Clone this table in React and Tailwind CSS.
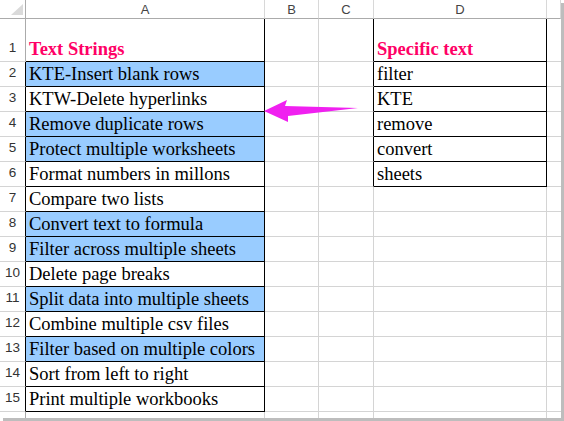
import React from 'react';

const rows = [
  { a: 'Text Strings', d: 'Specific text', head: true },
  { a: 'KTE-Insert blank rows', d: 'filter', blue: true },
  { a: 'KTW-Delete hyperlinks', d: 'KTE' },
  { a: 'Remove duplicate rows', d: 'remove', blue: true },
  { a: 'Protect multiple worksheets', d: 'convert', blue: true },
  { a: 'Format numbers in millons', d: 'sheets' },
  { a: 'Compare two lists' },
  { a: 'Convert text to formula', blue: true },
  { a: 'Filter across multiple sheets', blue: true },
  { a: 'Delete page breaks' },
  { a: 'Split data into multiple sheets', blue: true },
  { a: 'Combine multiple csv files' },
  { a: 'Filter based on multiple colors', blue: true },
  { a: 'Sort from left to right' },
  { a: 'Print multiple workbooks' },
];

const cols = ['A', 'B', 'C', 'D', ''];

const App = () => {
  return (
    <div className="w-[564px] h-[421px] bg-white overflow-hidden relative">
      <div className="w-[561px] h-[418px] overflow-hidden bg-white shadow-[3px_3px_0_0_#bdbdbd]">
        <div
          className="grid font-['Liberation_Serif',serif] text-[18.5px] text-black"
          style={{
            gridTemplateColumns: '26px 239px 54px 55px 173px 14px',
            gridTemplateRows: '19px 43px repeat(14, 25px) 6px',
          }}
        >
          {/* Header row */}
          <div className="relative border-r border-b border-[#ababab] bg-white">
            <div className="absolute left-[11px] top-[4px] w-0 h-0 border-l-[12px] border-l-transparent border-b-[11px] border-b-[#dadada]"></div>
          </div>
          {cols.map((c, i) => (
            <div
              key={c + i}
              className="flex items-center justify-center border-r border-b border-r-[#d8d8d8] border-b-[#ababab] bg-white font-['Liberation_Sans',sans-serif] text-[13px] text-[#444444] pt-[1px]"
            >
              {c}
            </div>
          ))}

          {rows.map((r, i) => {
            const n = i + 1;
            const inD = n <= 6;
            return (
              <React.Fragment key={n}>
                <div
                  className={`flex items-end justify-center border-b border-b-[#d4d4d4] border-r font-['Liberation_Sans',sans-serif] text-[13.5px] text-[#333333] pb-[3px] ${n >= 2 ? 'border-r-black' : 'border-r-[#ababab]'}`}
                >
                  {n}
                </div>
                <div
                  className={`flex items-end pl-[3px] pb-[1px] leading-[22px] border-r border-b border-black whitespace-nowrap ${r.blue ? 'bg-[#99ccff]' : ''} ${r.head ? 'font-bold text-[#ff0066]' : ''}`}
                >
                  {r.a}
                </div>
                <div className="border-r border-b border-[#d4d4d4]"></div>
                <div className={`border-r border-b border-b-[#d4d4d4] ${inD ? 'border-r-black' : 'border-r-[#d4d4d4]'}`}></div>
                <div
                  className={`flex items-end pl-[3px] pb-[1px] leading-[22px] border-r border-b whitespace-nowrap ${inD ? 'border-black' : 'border-[#d4d4d4]'} ${r.head ? 'font-bold text-[#ff0066]' : ''}`}
                >
                  {r.d || ''}
                </div>
                <div className="border-b border-[#d4d4d4]"></div>
              </React.Fragment>
            );
          })}

          {/* Row 16, partial */}
          <div className="flex items-start justify-center border-r border-[#ababab] font-['Liberation_Sans',sans-serif] text-[13.5px] text-[#333333] overflow-hidden leading-[13px] pt-[4px]">
            16
          </div>
          <div className="border-r border-[#d4d4d4]"></div>
          <div className="border-r border-[#d4d4d4]"></div>
          <div className="border-r border-[#d4d4d4]"></div>
          <div className="border-r border-[#d4d4d4]"></div>
          <div></div>
        </div>
      </div>

      {/* Arrow pointing at the list */}
      <svg className="absolute left-0 top-0" width="564" height="421" viewBox="0 0 564 421">
        <polygon
          points="264,111 287,100 285,106 358,108 288,116 288,122"
          fill="#f020f0"
        />
      </svg>
    </div>
  );
};

export default App;
